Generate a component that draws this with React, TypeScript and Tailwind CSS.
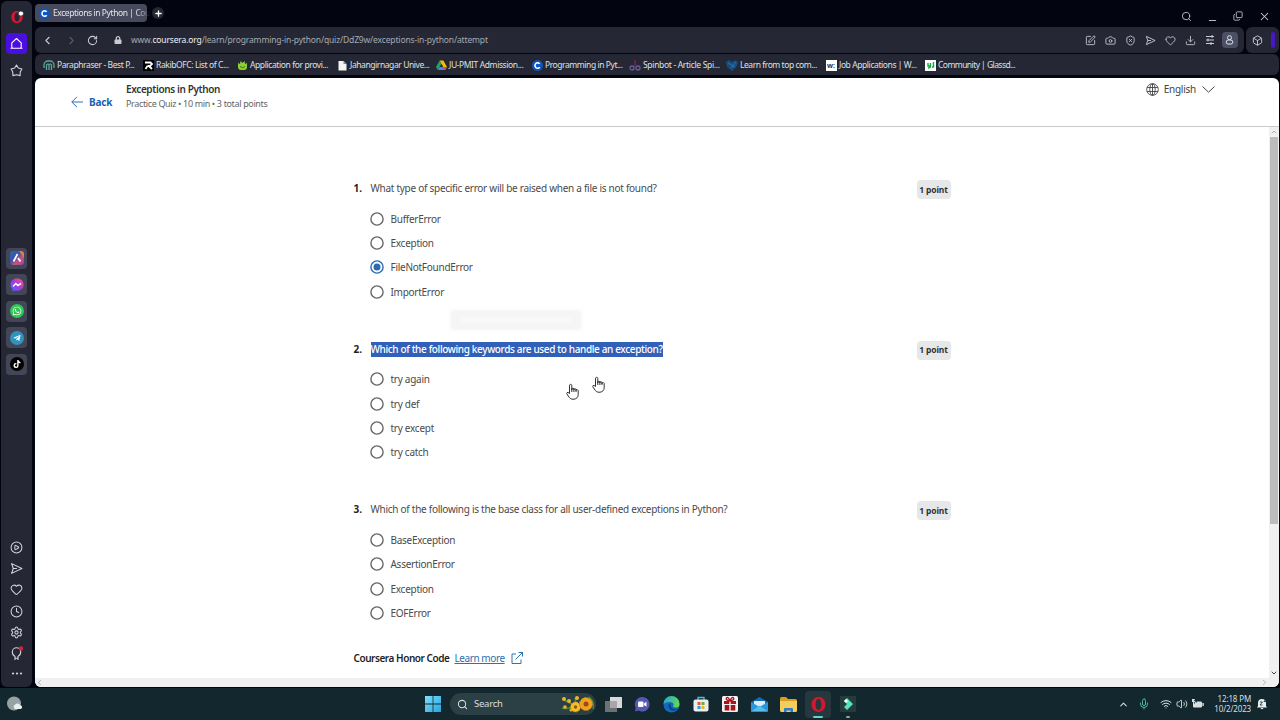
import React from "react";
import {
  Box, Camera, ChevronDown, ChevronLeft, ChevronRight, ChevronUp, CirclePlay, Clock, Copy,
  Download, Heart, Mic, Minus, Plus, RotateCw, Search, Settings, ShieldX, SquarePen, Volume2, Wifi, X,
} from "lucide-react";
import { FaLock, FaTelegramPlane, FaTiktok, FaWhatsapp } from "react-icons/fa";

type Question = {
  title: string;
  options: string[];
  picked?: number;
  highlighted?: boolean;
};

const QUESTIONS: Question[] = [
  {
    title: "What type of specific error will be raised when a file is not found?",
    options: ["BufferError", "Exception", "FileNotFoundError", "ImportError"],
    picked: 2,
  },
  {
    title: "Which of the following keywords are used to handle an exception?",
    options: ["try again", "try def", "try except", "try catch"],
    highlighted: true,
  },
  {
    title: "Which of the following is the base class for all user-defined exceptions in Python?",
    options: ["BaseException", "AssertionError", "Exception", "EOFError"],
  },
];

const OperaLogo = ({ size, dot }: { size: number; dot?: boolean }) => (
  <svg width={size} height={size} viewBox="0 0 16 16">
    <path fillRule="evenodd" fill="#d3182f" d="M8 1C4.200 1 1.500 4 1.500 8s2.700 7 6.500 7 6.500-3 6.500-7S11.800 1 8 1Zm0 1.800c1.800 0 2.800 2.400 2.800 5.200S9.800 13.200 8 13.200 5.200 10.800 5.200 8 6.200 2.800 8 2.800Z" />
    {dot && <circle cx="12.500" cy="4" r="3" fill="#fff" stroke="#252834" />}
  </svg>
);

const CourseraIcon = () => (
  <svg className="shrink-0" width="11" height="11" viewBox="0 0 12 12">
    <circle cx="6" cy="6" r="6" fill="#0b55c4" />
    <path d="M8.400 4.200A2.900 2.900 0 1 0 8.400 7.800" fill="none" stroke="#fff" strokeWidth="1.700" />
  </svg>
);

const SendIcon = ({ size }: { size: number }) => (
  <svg width={size} height={size} viewBox="0 0 24 24" fill="none" stroke="currentColor" strokeWidth="2" strokeLinejoin="round">
    <path d="M3 3 22 12 3 21 6 12ZM6 12h7" />
  </svg>
);

const HomeIcon = () => (
  <svg width="13" height="13" viewBox="0 0 13 13" fill="none" stroke="currentColor" strokeWidth="1.100" strokeLinejoin="round">
    <path d="M1.800 5.800 6.500 1.500l4.700 4.300V10a1.200 1.200 0 0 1-1.200 1.200H3A1.200 1.200 0 0 1 1.800 10ZM.5 11.300h3M9.500 11.300h3" />
  </svg>
);

const StarIcon = () => (
  <svg width="13" height="13" viewBox="0 0 24 24" fill="none" stroke="currentColor" strokeWidth="2" strokeLinejoin="round">
    <path d="m12 2 3.400 5.500 6.600 1.700-3 5.200-.4 7.100L12 20l-6.600 1.500-.4-7.100-3-5.200 6.600-1.700Z" />
  </svg>
);

const BOOKMARKS = [
  {
    label: "Paraphraser - Best P...",
    slot: "w-[99px]",
    track: "tracking-[-0.400px]",
    icon: (
      <svg width="12" height="11" viewBox="0 0 12 11" fill="none" stroke="#5aa995" strokeWidth="1.300">
        <path d="M1 8V5a4 4 0 0 1 4-4h2a4 4 0 0 1 4 4v3M3.500 10V5.500A1.500 1.500 0 0 1 6 4.500V10M8.500 10V5.500A1.500 1.500 0 0 0 6 4.500" />
      </svg>
    ),
  },
  {
    label: "RakibOFC: List of C...",
    slot: "w-[94px]",
    track: "tracking-[-0.400px]",
    icon: (
      <svg width="11" height="11" viewBox="0 0 11 11">
        <path fill="#000" d="M0 0h11v11H0z" />
        <path d="M2 2.500h5.500L9 4 7 6H4.500M6 6 9 9M2.500 9 4.500 6" stroke="#fff" strokeWidth="1.800" fill="none" />
      </svg>
    ),
  },
  {
    label: "Application for provi...",
    slot: "w-[100px]",
    track: "tracking-[-0.400px]",
    icon: (
      <svg width="11" height="11" viewBox="0 0 11 11">
        <path fill="#8fd12c" d="M1 3 3 4 3.500 1 5.500 3 7.500 1 8 4l2-1v4.500A3 3 0 0 1 7 10H4a3 3 0 0 1-3-2.500Z" />
        <path d="M3 6.500q2.500 2.500 5 0" stroke="#35721f" fill="none" />
      </svg>
    ),
  },
  {
    label: "Jahangirnagar Unive...",
    slot: "w-[99px]",
    track: "tracking-[-0.420px]",
    icon: (
      <svg width="11" height="11" viewBox="0 0 11 11">
        <path fill="#f3f4f6" d="M1.500 1h5l3 3v6.500h-8Z" />
        <path fill="#7c808b" d="M6.500 1v3h3Z" />
      </svg>
    ),
  },
  {
    label: "JU-PMIT Admission...",
    slot: "w-[96px]",
    track: "tracking-[-0.400px]",
    icon: (
      <svg width="11" height="11" viewBox="0 0 12 11">
        <path fill="#1fa463" d="M4 0 0 7l2 3.500L6 3.500Z" />
        <path fill="#fbbc04" d="M4 0h4l4 7H8Z" />
        <path fill="#4285f4" d="M4 7h8l-2 3.500H2Z" />
        <path fill="#e8453c" d="M8 7h4l-2 3.500Z" />
      </svg>
    ),
  },
  { label: "Programming in Pyt...", slot: "w-[98px]", track: "tracking-[-0.440px]", icon: <CourseraIcon /> },
  {
    label: "Spinbot - Article Spi...",
    slot: "w-[97px]",
    track: "tracking-[-0.320px]",
    icon: (
      <svg width="12" height="11" viewBox="0 0 12 11" fill="none">
        <path d="M6 0v6" stroke="#8a2358" strokeWidth="1.200" />
        <circle cx="3" cy="8" r="2" stroke="#6b5b9c" strokeWidth="1.300" />
        <circle cx="9" cy="8" r="2" stroke="#6b5b9c" strokeWidth="1.300" />
      </svg>
    ),
  },
  {
    label: "Learn from top com...",
    slot: "w-[99px]",
    track: "tracking-[-0.450px]",
    icon: (
      <svg width="12" height="11" viewBox="0 0 12 11">
        <path fill="#164d7e" d="M0 2 3 0l3 2 3-2 3 2-1 4-5 5-5-4Z" />
        <path d="m2 3 7 4M10 2 5 8" stroke="#2a74ac" />
      </svg>
    ),
  },
  {
    label: "Job Applications | W...",
    slot: "w-[99px]",
    track: "tracking-[-0.420px]",
    icon: <span className="flex size-[11px] items-center justify-center bg-white text-[7px] font-bold leading-none text-[#333]">w:</span>,
  },
  {
    label: "Community | Glassd...",
    slot: "w-[100px]",
    track: "tracking-[-0.560px]",
    icon: (
      <svg width="11" height="11" viewBox="0 0 11 11">
        <path fill="#fff" d="M0 0h11v11H0z" />
        <path d="M3 3v3h2.500V3M5.500 6q0 2-2.500 2M8.500 2v5H7" stroke="#0caa41" strokeWidth="1.400" fill="none" />
      </svg>
    ),
  },
];

const SIDE_APPS = [
  <svg key="aria" width="14" height="14" viewBox="0 0 14 14">
    <defs>
      <linearGradient id="aria" x1="0" y1="0" x2="1" y2="1">
        <stop stopColor="#2d6c9b" />
        <stop offset="0.400" stopColor="#3b50b8" />
        <stop offset="0.650" stopColor="#c5586f" />
        <stop offset="1" stopColor="#8f3ec4" />
      </linearGradient>
    </defs>
    <rect width="14" height="14" rx="3" fill="url(#aria)" />
    <path d="M9 0h2a3 3 0 0 1 3 3v4Z" fill="#e07b4c" />
    <path d="M3.500 10.500 7.500 3M8 7l2.500 3.500" stroke="#fff" strokeWidth="1.700" />
  </svg>,
  <svg key="messenger" width="14" height="14" viewBox="0 0 14 14">
    <defs>
      <linearGradient id="msgr" x1="0" y1="1" x2="1" y2="0">
        <stop stopColor="#3d6bff" />
        <stop offset="0.500" stopColor="#a738e6" />
        <stop offset="1" stopColor="#ff5b72" />
      </linearGradient>
    </defs>
    <path fill="url(#msgr)" d="M7 .5c-3.800 0-6.600 2.600-6.600 6.200 0 2 .8 3.600 2.200 4.700v2.100l2-1.100c.7.200 1.500.3 2.400.3 3.800 0 6.600-2.500 6.600-6S10.800.5 7 .5Z" />
    <path d="M3 8.500 5.800 5.600 8 7.500l3-2.200" stroke="#fff" strokeWidth="1.500" fill="none" />
  </svg>,
  <span key="whatsapp" className="flex size-3.5 items-center justify-center rounded-full bg-[#2fc653] text-white"><FaWhatsapp size={10} /></span>,
  <span key="telegram" className="flex size-3.5 items-center justify-center rounded-full bg-[#3193bd] text-white"><FaTelegramPlane size={8} /></span>,
  <span key="tiktok" className="flex size-3.5 items-center justify-center rounded-full bg-black text-white"><FaTiktok size={8} /></span>,
];

function Sidebar() {
  return (
    <aside className="mt-px ml-px flex h-[686px] w-[31px] shrink-0 flex-col items-center rounded-md bg-[#252834] text-[#d3d5dc]">
      <div className="mt-[9px] flex h-3.5 items-center"><OperaLogo size={14} dot /></div>
      <div className="mt-[9px] flex size-[21px] items-center justify-center rounded bg-[#4a0ee0] text-white"><HomeIcon /></div>
      <div className="mt-[9px] flex h-3.5 items-center"><StarIcon /></div>
      <div className="mt-[170.500px] flex flex-col gap-[5.600px]">
        {SIDE_APPS.map((app, i) => (
          <div key={i} className="flex size-[21px] items-center justify-center rounded bg-[#424657]">{app}</div>
        ))}
      </div>
      <div className="mt-auto mb-[5.500px] flex flex-col items-center">
        <div className="flex h-[21.300px] items-center"><CirclePlay size={13} strokeWidth={1.900} /></div>
        <div className="flex h-[21.300px] items-center"><SendIcon size={13} /></div>
        <div className="flex h-[21.300px] items-center"><Heart size={13} strokeWidth={1.900} /></div>
        <div className="flex h-[21.300px] items-center"><Clock size={13} strokeWidth={1.900} /></div>
        <div className="flex h-[21.300px] items-center"><Settings size={13} strokeWidth={1.900} /></div>
        <div className="flex h-[21.300px] items-center">
          <svg width="13" height="15" viewBox="0 0 13 15" fill="none" stroke="currentColor" strokeWidth="1.100">
            <path d="M5 14V10.500Q2.300 9 2.300 6a4.200 4.200 0 0 1 8.400 0Q10.700 9 8 10.500V14M5 12.300h3" />
            <circle cx="11" cy="2.500" r="2.200" fill="#d8203a" stroke="none" />
          </svg>
        </div>
        <div className="flex h-[17px] items-center">
          <svg width="12" height="3" viewBox="0 0 12 3" fill="currentColor"><circle cx="2" cy="1.500" r="1.100" /><circle cx="6" cy="1.500" r="1.100" /><circle cx="10" cy="1.500" r="1.100" /></svg>
        </div>
      </div>
    </aside>
  );
}

function TabStrip() {
  return (
    <div className="flex h-[27px] items-start text-[#e4e5ea]">
      <div className="mt-1 flex h-[18px] w-28 items-center gap-[3px] rounded bg-[#464a5c] pl-1">
        <CourseraIcon />
        <span className="whitespace-nowrap mask-r-from-85% text-[8.500px] tracking-[-0.420px]">Exceptions in Python | Cou</span>
      </div>
      <div className="mt-[7px] ml-[5px] flex size-3 items-center justify-center rounded-full bg-[#252834] text-white"><Plus size={9} strokeWidth={3.500} /></div>
      <div className="ml-auto flex items-center pr-px text-[#c9cbd2]">
        <div className="mt-1 flex h-4 w-[26px] items-center justify-center"><Search size={11} strokeWidth={1.900} /></div>
        <div className="mt-3 flex h-4 w-[26px] items-center justify-center"><Minus size={11} strokeWidth={2} /></div>
        <div className="mt-1 flex h-4 w-[26px] items-center justify-center"><Copy size={10} strokeWidth={2} className="-scale-x-100 rotate-180" /></div>
        <div className="mt-1 flex h-4 w-[27px] items-center justify-center"><X size={13} strokeWidth={1.900} /></div>
      </div>
    </div>
  );
}

function AddressBar() {
  return (
    <div className="flex h-[26px] gap-0.5 text-[#c9cbd2]">
      <div className="flex w-[1209px] items-center rounded-md bg-[#252834]">
        <div className="flex w-6 justify-center"><ChevronLeft size={13} strokeWidth={2} /></div>
        <div className="flex w-6 justify-center text-[#575b68]"><ChevronRight size={13} strokeWidth={2} /></div>
        <div className="flex w-[18px] justify-center"><RotateCw size={11} strokeWidth={2.200} /></div>
        <div className="ml-[7px] flex w-5 justify-center"><FaLock size={8} /></div>
        <div className="ml-[3px] text-[8.500px] tracking-[-0.150px] whitespace-nowrap text-[#a5a8b2]">
          www.<span className="text-[#f0f1f4]">coursera.org</span>/learn/programming-in-python/quiz/DdZ9w/exceptions-in-python/attempt
        </div>
        <div className="ml-auto flex items-center pr-[6.500px]">
          <div className="flex w-5 justify-center"><SquarePen size={11} strokeWidth={1.900} /></div>
          <div className="flex w-5 justify-center"><Camera size={11} strokeWidth={1.900} /></div>
          <div className="flex w-5 justify-center"><ShieldX size={11} strokeWidth={1.900} /></div>
          <div className="flex w-5 justify-center"><SendIcon size={11} /></div>
          <div className="flex w-5 justify-center"><Heart size={11} strokeWidth={1.900} /></div>
          <div className="flex w-5 justify-center"><Download size={11} strokeWidth={1.900} /></div>
          <div className="flex w-[18px] justify-center">
            <svg width="10" height="10" viewBox="0 0 10 10" stroke="currentColor">
              <path d="M1 1.500h8M1 5h8M1 8.500h8M7 0v3M3 3.500v3M6 7v3" />
            </svg>
          </div>
          <div className="ml-[3px] flex size-4 items-center justify-center rounded bg-[#4c5064]">
            <svg width="9" height="10" viewBox="0 0 9 10" fill="none" stroke="#e2e3ea">
              <circle cx="4.500" cy="2.700" r="2" />
              <path d="M1.200 7.200a2.200 2.200 0 0 1 2.200-2.200h2.200a2.200 2.200 0 0 1 2.200 2.200Q7.800 9 6 9H3Q1.200 9 1.200 7.200Z" />
            </svg>
          </div>
        </div>
      </div>
      <div className="flex flex-1 items-center justify-between rounded-md bg-[#252834] pr-1 pl-1.5">
        <Box size={11} strokeWidth={2} />
        <div className="h-4 w-1 rounded-sm bg-[#4a14c8]" />
      </div>
    </div>
  );
}

function BookmarkBar() {
  return (
    <div className="mt-px flex h-[21px] items-center rounded-md bg-[#252834] pt-0.5 pl-[8px] text-[8.500px] text-[#dfe0e6]">
      {BOOKMARKS.map((b) => (
        <div key={b.label} className={`flex shrink-0 items-center gap-0.5 whitespace-nowrap ${b.slot}`}>
          <span className="flex w-3 justify-center">{b.icon}</span>
          <span className={b.track}>{b.label}</span>
        </div>
      ))}
    </div>
  );
}

function QuestionBlock({ q, no }: { q: Question; no: number }) {
  return (
    <section className="h-[160.700px]">
      <div className="flex h-5 items-center">
        <span className="w-[17px] pt-px text-[10px] font-bold text-[#1f1f1f]">{no}.</span>
        {q.highlighted ? (
          <span className="mt-px h-[15px] bg-[#325fb8] text-[10px] leading-[15px] font-medium tracking-[-0.365px] whitespace-nowrap text-white">{q.title}</span>
        ) : (
          <span className="pt-px text-[10px] tracking-[-0.270px] whitespace-nowrap text-[#4a4a4a]">{q.title}</span>
        )}
        <span className="mt-[3px] ml-auto flex h-[19px] w-[34px] items-center justify-center rounded-sm bg-[#e5e7e8] pt-px text-[8.500px] font-bold tracking-[-0.150px] whitespace-nowrap text-[#333]">1 point</span>
      </div>
      <div className="mt-[8.500px] pl-4">
        {q.options.map((label, i) => (
          <div key={label} className="flex h-[24.300px] items-center gap-1.5">
            <svg width="14" height="14" viewBox="0 0 14 14" fill="none">
              <circle cx="7" cy="7" r="6.100" stroke={i === q.picked ? "#2a6bb5" : "#666"} strokeWidth="1.400" />
              {i === q.picked && <circle cx="7" cy="7" r="3.500" fill="#2a6bb5" />}
            </svg>
            <span className="pt-px pl-px text-[10px] tracking-[-0.270px] text-[#4a4a4a]">{label}</span>
          </div>
        ))}
      </div>
    </section>
  );
}

const HandCursor = () => (
  <svg width="13" height="17" viewBox="0 0 13 17" fill="#fff" stroke="#333" strokeLinejoin="round">
    <path d="M3.500 10.500V2.200a1.200 1.200 0 0 1 2.300 0V7 5.500q1.100-.8 2.100.3V7 6q1.200-.7 2.100.4v1.100-.7q1.800-.6 2.200.7v4q0 2.500-1.200 3.300-1.500 1.500-4 1.500-2.700 0-3.800-2L.7 10.700q0-1.500 1.300-1.300Z" />
    <path d="M5.800 6v3M7.900 6.500V9M10 7v2" fill="none" />
  </svg>
);

function QuizPage() {
  return (
    <div className="mt-[3px] flex h-[609px] flex-col overflow-hidden rounded-md bg-white">
      <header className="flex h-[49px] shrink-0 items-start border-b border-[#c9c9c9] pr-[64px]">
        <div className="mt-[17px] ml-[36px] flex h-[14px] w-[55px] items-center gap-1.5 text-[#1a5fb4]">
          <svg width="12" height="12" viewBox="0 0 12 12" fill="none" stroke="currentColor" strokeWidth="0.900"><path d="M6 .8.800 6 6 11.200M.8 6H12" /></svg>
          <span className="text-[10px] font-bold tracking-[-0.200px]">Back</span>
        </div>
        <div className="mt-1 text-[#333]">
          <div className="text-[10px] leading-[15px] font-semibold tracking-[-0.370px]">Exceptions in Python</div>
          <div className="text-[9px] leading-[14px] tracking-[-0.360px] text-[#666]">Practice Quiz • 10 min • 3 total points</div>
        </div>
        <div className="mt-1 ml-auto flex h-[15px] items-center text-[#444]">
          <svg width="13" height="13" viewBox="0 0 13 13" fill="none" stroke="currentColor" strokeWidth="0.900">
            <circle cx="6.500" cy="6.500" r="5.800" />
            <ellipse cx="6.500" cy="6.500" rx="2.700" ry="5.800" />
            <path d="M1.200 4.500h10.600M1.200 8.500h10.600M6.500.7v11.600" />
          </svg>
          <span className="ml-[5px] text-[10px] tracking-[-0.250px]">English</span>
          <svg className="ml-1.5" width="13" height="7" viewBox="0 0 13 7" fill="none" stroke="currentColor"><path d="m.5.5 6 5.700 6-5.700" /></svg>
        </div>
      </header>
      <div className="flex h-[551px]">
        <div className="relative flex-1 overflow-hidden pt-[51px] pl-[318.500px]">
          <div className="w-[597px]">
            {QUESTIONS.map((q, i) => (
              <QuestionBlock key={q.title} q={q} no={i + 1} />
            ))}
          </div>
          <div className="-mt-2.5 flex h-4 items-center text-[10px]">
            <span className="font-semibold tracking-[-0.450px] text-[#1f1f1f]">Coursera Honor Code</span>
            <span className="ml-[5px] tracking-[-0.420px] text-[#2a73b0] underline">Learn more</span>
            <svg className="ml-1.5" width="12" height="12" viewBox="0 0 12 12" fill="none" stroke="#2a73b0"><path d="M5 2H1v9.500h9V7.500M4.500 7.500l7-7M7.500.5h4v4" /></svg>
          </div>
          {/* fading selection tooltip */}
          <div className="absolute top-[183px] left-[415px] flex h-[20px] w-[132px] items-center justify-center rounded-sm bg-[#f5f5f5] blur-[1px]">
            <div className="h-1.5 w-28 bg-[#f8f8f8]" />
          </div>
          <div className="absolute top-[256px] left-[531px]"><HandCursor /></div>
          <div className="absolute top-[249px] left-[557px]"><HandCursor /></div>
        </div>
        <div className="flex w-[10px] shrink-0 flex-col items-center bg-[#f0f0f0] text-[#8c8c8c]">
          <ChevronUp size={8} className="my-px" />
          <div className="h-[387px] w-2 bg-[#bcbcbc]" />
          <ChevronDown size={8} strokeWidth={3} className="mt-auto mb-px text-[#444]" />
        </div>
      </div>
      <div className="flex h-[9px] items-center justify-between bg-[#f0f0f0] pr-2.5 text-[#999]">
        <ChevronLeft size={9} />
        <ChevronRight size={9} />
      </div>
    </div>
  );
}

const Flowers = () => (
  <svg width="35" height="18" viewBox="0 0 35 18">
    <path d="M1 13q8 2 14-4M3 5q7 3 12 7M14 3q2 8 0 14M28 2q6 5 4 12" stroke="#4e8a3a" strokeWidth="1.500" fill="none" />
    <g fill="#e8b62c"><circle cx="3" cy="4" r="2" /><circle cx="8" cy="6" r="2" /><circle cx="4" cy="12" r="1.800" /><circle cx="16" cy="3" r="2" /><circle cx="10" cy="15" r="1.500" /></g>
    <circle cx="14.500" cy="12" r="5" fill="#f2bd25" stroke="#c98a16" strokeDasharray="1.500 1.500" />
    <circle cx="14.500" cy="12" r="1.700" fill="#8a5a12" />
    <circle cx="25" cy="9" r="6.500" fill="#f0a21f" stroke="#cc7f14" strokeDasharray="2 1.500" />
    <circle cx="25" cy="9" r="2.500" fill="#9a4a14" />
  </svg>
);

const TASK_APPS = [
  <svg key="view" width="17" height="15" viewBox="0 0 17 15">
    <path fill="#d8d8da" d="M5 0h12v11H5z" />
    <path fill="#6d7174" d="M0 4h12v11H0z" />
    <path fill="#a5a7aa" d="M5 4h7v7H5z" />
  </svg>,
  <svg key="chat" width="16" height="16" viewBox="0 0 16 16">
    <path fill="#5558af" d="M8 1a7.300 7.300 0 1 1-3.500 13.500L1 15.500l.7-3.800A7.300 7.300 0 0 1 8 1Z" />
    <rect x="4" y="5.500" width="5.500" height="5.500" rx="1" fill="#fff" />
    <path fill="#fff" d="m10 7.500 2.500-1.800v5L10 9Z" />
  </svg>,
  <svg key="edge" width="17" height="17" viewBox="0 0 17 17">
    <defs>
      <linearGradient id="edge" x1="0" y1="0" x2="1" y2="0.300"><stop stopColor="#249fdd" /><stop offset="1" stopColor="#5dd65b" /></linearGradient>
    </defs>
    <circle cx="8.500" cy="8.500" r="8" fill="#1468b8" />
    <path fill="url(#edge)" d="M.5 8A8 8 0 0 1 16.500 8q.2 3.500-3.500 3.500-3 0-3-1.200.8-.8.500-2Q10 6 7 6 2.500 6 .5 8Z" />
    <path fill="#0d3f83" d="M7 7.500Q4.500 9 6 12t6 2.500q2-.5 3-1.800-3 1.200-5.500-.2T7 7.500Z" />
  </svg>,
  <svg key="store" width="16" height="16" viewBox="0 0 16 16">
    <path d="M5 4V1.500h6V4" stroke="#53b4e4" strokeWidth="1.300" fill="none" />
    <rect x=".5" y="3.500" width="15" height="12" rx="2" fill="#e9edef" />
    <path fill="#e25a2b" d="M4.500 6h3v3h-3z" /><path fill="#6fae2a" d="M8.500 6h3v3h-3z" />
    <path fill="#2a9bdc" d="M4.500 10h3v3h-3z" /><path fill="#f0b526" d="M8.500 10h3v3h-3z" />
  </svg>,
  <svg key="gift" width="16" height="16" viewBox="0 0 16 16">
    <rect width="16" height="16" rx="1.500" fill="#f5f1f1" />
    <path fill="#a9131d" d="M2 5h5.300v3H2zM8.700 5H14v3H8.700zM2.700 9h4.600v5.500H2.700zM8.700 9h4.600v5.500H8.700z" />
    <path d="M8 5Q3 4 4.500 2T8 5Q13 4 11.500 2T8 5" stroke="#a9131d" strokeWidth="1.300" fill="none" />
  </svg>,
  <svg key="mail" width="17" height="16" viewBox="0 0 17 16">
    <path fill="#1769b0" d="M0 6 8.500 1 17 6v9H0Z" />
    <path fill="#d9edf8" d="M3 5h11v6H3z" />
    <path fill="#2b95d8" d="m0 6 8.500 5L17 6v9.500H0Z" />
    <path fill="#54bdec" d="m0 15.500 8.500-6 8.500 6Z" />
  </svg>,
  <svg key="files" width="17" height="15" viewBox="0 0 17 15">
    <path fill="#d99d24" d="M0 1.500Q0 0 1.500 0H6l2 2h7.500Q17 2 17 3.500V8H0Z" />
    <path fill="#f5cd5b" d="M0 4h17v9.500q0 1.500-1.500 1.500h-14Q0 15 0 13.500Z" />
    <path fill="#2b7cc9" d="M4 15v-3q0-1 1-1h7q1 0 1 1v3h-2.500v-1.500h-4V15Z" />
  </svg>,
];

function Taskbar() {
  return (
    <footer className="flex h-8 items-center bg-[#12282e] text-[#d9dfe1]">
      <div className="ml-[7px] flex w-[16px]">
        <svg width="16" height="16" viewBox="0 0 16 16">
          <circle cx="7" cy="7.500" r="7" fill="#96a1a6" />
          <path fill="#e8eef2" d="M8 13a2.500 2.500 0 0 1 .3-4.500 3 3 0 0 1 5 .7A2 2 0 0 1 14 13Z" />
        </svg>
      </div>
      <div className="ml-[402px] flex w-4">
        <svg width="16" height="16" viewBox="0 0 16 16">
          <defs><linearGradient id="win" x1="0" y1="0" x2="1" y2="1"><stop stopColor="#7fe0f7" /><stop offset="1" stopColor="#27a3e2" /></linearGradient></defs>
          <path fill="url(#win)" d="M0 0h7.600v7.600H0zM8.400 0H16v7.600H8.400zM0 8.400h7.600V16H0zM8.400 8.400H16V16H8.400z" />
        </svg>
      </div>
      <div className="ml-[9px] flex h-[22px] w-[146px] items-center rounded-full bg-[#2b4045] pl-[7px]">
        <Search size={11} strokeWidth={2.200} />
        <span className="ml-1.5 text-[9.500px] tracking-[-0.250px]">Search</span>
        <span className="ml-auto"><Flowers /></span>
      </div>
      <div className="ml-[2.500px] flex items-center">
        {TASK_APPS.map((app, i) => (
          <div key={i} className="flex w-[29.300px] justify-center">{app}</div>
        ))}
        <div className="relative flex w-[29.300px] justify-center">
          <div className="flex h-[27px] w-[26px] items-center justify-center rounded bg-[#26383d]"><OperaLogo size={17} /></div>
          <div className="absolute bottom-0 h-0.5 w-2.5 rounded bg-[#62d5cf]" />
        </div>
        <div className="relative flex h-[27px] w-[29.300px] items-center justify-center">
          <svg width="16" height="16" viewBox="0 0 16 16">
            <path fill="#263b3c" d="M0 0h16v16H0z" />
            <path fill="#55e3c0" d="m4 5 3-3 6 6-6 6-3-3 3-3Z" />
            <path fill="#fff" d="m4 5 2-2 2 2-2 2Z" />
          </svg>
          <div className="absolute bottom-0 h-0.5 w-1 rounded bg-[#93a0a3]" />
        </div>
      </div>
      <div className="ml-auto flex items-center">
        <div className="flex w-5 justify-center"><ChevronUp size={11} strokeWidth={2.200} /></div>
        <div className="flex w-[22px] justify-center text-[#49b6a9]"><Mic size={12} strokeWidth={2} /></div>
        <div className="flex w-[21px] justify-center"><Wifi size={12} strokeWidth={2} /></div>
        <div className="flex w-[14px]"><Volume2 size={12} strokeWidth={1.800} /></div>
        <div className="flex w-4 justify-center">
          <svg width="12" height="10" viewBox="0 0 12 10">
            <rect x="1" y="2.500" width="9" height="6" rx="1.200" fill="#d9dfe1" />
            <path fill="#d9dfe1" d="M10.400 4h1.400v3h-1.400z" />
            <path d="M2.500.5v4M.8 2h3.400v1.500" stroke="#12282e" fill="none" />
            <path fill="#d9dfe1" d="M0 0h3L2 2h1.500L1 5l.5-2H0Z" />
          </svg>
        </div>
      </div>
      <div className="w-[45px] text-right text-[8px] leading-[10.500px] tracking-[-0.150px] whitespace-nowrap">
        <div>12:18 PM</div>
        <div>10/2/2023</div>
      </div>
      <div className="mr-3 ml-[5px] flex w-3 justify-center">
        <svg width="12" height="12" viewBox="0 0 12 12">
          <path fill="#e8edee" d="M2 8V5a4 4 0 0 1 8 0v3l1 1.500H1ZM4.500 10h3q-1.500 2.500-3 0Z" />
          <path d="M4 4h2.500L4 7h2.500M8 1h2L8 3.500h2" stroke="#12282e" strokeWidth="0.800" fill="none" />
        </svg>
      </div>
    </footer>
  );
}

export default function App() {
  return (
    <div className="flex h-[720px] w-[1280px] flex-col overflow-hidden bg-[#02040f] font-['Noto_Sans',sans-serif]">
      <div className="flex h-[688px] shrink-0">
        <Sidebar />
        <div className="ml-[3px] flex w-[1244px] flex-col">
          <TabStrip />
          <AddressBar />
          <BookmarkBar />
          <QuizPage />
        </div>
      </div>
      <Taskbar />
    </div>
  );
}
